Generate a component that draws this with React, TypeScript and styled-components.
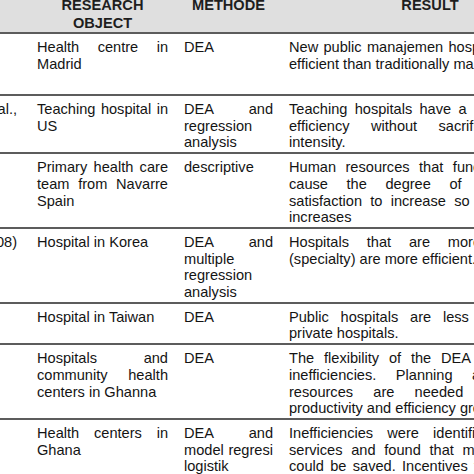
import React from "react";
import styled, { createGlobalStyle } from "styled-components";

interface StudyRow {
    author: string;
    object: string;
    method: string;
    result: string;
    minHeight?: number;
}

const ROWS: StudyRow[] = [
    {
        author: "",
        object: "Health centre in Madrid",
        method: "DEA",
        result: "New public manajemen hospitals are more efficient than traditionally managed ones.",
        minHeight: 62,
    },
    {
        author: "Rosko et al.,",
        object: "Teaching hospital in US",
        method: "DEA and regression analysis",
        result: "Teaching hospitals have a higher level of efficiency without sacrificing service intensity.",
    },
    {
        author: "",
        object: "Primary health care team from Navarre Spain",
        method: "descriptive",
        result: "Human resources that function optimally cause the degree of patient care satisfaction to increase so that efficiency increases",
    },
    {
        author: "Kim (2008)",
        object: "Hospital in Korea",
        method: "DEA and multiple regression analysis",
        result: "Hospitals that are more specialized (specialty) are more efficient.",
    },
    {
        author: "",
        object: "Hospital in Taiwan",
        method: "DEA",
        result: "Public hospitals are less efficient than private hospitals.",
    },
    {
        author: "",
        object: "Hospitals and community health centers in Ghanna",
        method: "DEA",
        result: "The flexibility of the DEA model shows inefficiencies. Planning and use of resources are needed to increase productivity and efficiency growth.",
    },
    {
        author: "",
        object: "Health centers in Ghana",
        method: "DEA and model regresi logistik",
        result: "Inefficiencies were identified in health services and found that many resources could be saved. Incentives to improve the efficiency of health centers are needed.",
    },
];

const GlobalStyle = createGlobalStyle`
    html, body {
        margin: 0;
        padding: 0;
        background: #ffffff;
        overflow: hidden;
    }
    body {
        font-family: "Liberation Sans", Arial, sans-serif;
        color: #141414;
    }
`;

const Viewport = styled.div`
    width: 474px;
    height: 474px;
    overflow: hidden;
    background: #ffffff;
`;

const Table = styled.table`
    table-layout: fixed;
    border-collapse: collapse;
    width: 719px;
    margin: -5px 0 0 -140px;
    font-size: 14.6px;
    line-height: 16.7px;
`;

const HeadRow = styled.tr`
    background: #dfdfdf;
`;

const HeadCell = styled.th`
    padding: 2px 8px 0;
    vertical-align: top;
    text-align: center;
    font-weight: 700;
    line-height: 17.5px;
    color: #1e1e1e;
    border-bottom: 2px solid #5c5c5c;
`;

const Row = styled.tr<{ $minHeight?: number }>`
    height: ${p => (p.$minHeight ? `${p.$minHeight}px` : "auto")};
`;

const Cell = styled.td<{ $align?: "right" | "justify" }>`
    padding: 5px 8px 1px;
    vertical-align: top;
    text-align: ${p => p.$align ?? "justify"};
    white-space: ${p => (p.$align === "right" ? "nowrap" : "normal")};
    border-bottom: 2px solid #5c5c5c;
`;

const AuthorCell = styled(Cell)`
    padding-right: 12px;
`;

export default function App() {
    return (
        <Viewport>
            <GlobalStyle />
            <Table>
                <colgroup>
                    <col style={{ width: 169 }} />
                    <col style={{ width: 147 }} />
                    <col style={{ width: 105 }} />
                    <col style={{ width: 298 }} />
                </colgroup>
                <thead>
                    <HeadRow>
                        <HeadCell>AUTHOR</HeadCell>
                        <HeadCell>RESEARCH OBJECT</HeadCell>
                        <HeadCell>METHODE</HeadCell>
                        <HeadCell>RESULT</HeadCell>
                    </HeadRow>
                </thead>
                <tbody>
                    {ROWS.map((row, i) => (
                        <Row key={i} $minHeight={row.minHeight}>
                            <AuthorCell $align="right">{row.author}</AuthorCell>
                            <Cell>{row.object}</Cell>
                            <Cell>{row.method}</Cell>
                            <Cell>{row.result}</Cell>
                        </Row>
                    ))}
                </tbody>
            </Table>
        </Viewport>
    );
}
